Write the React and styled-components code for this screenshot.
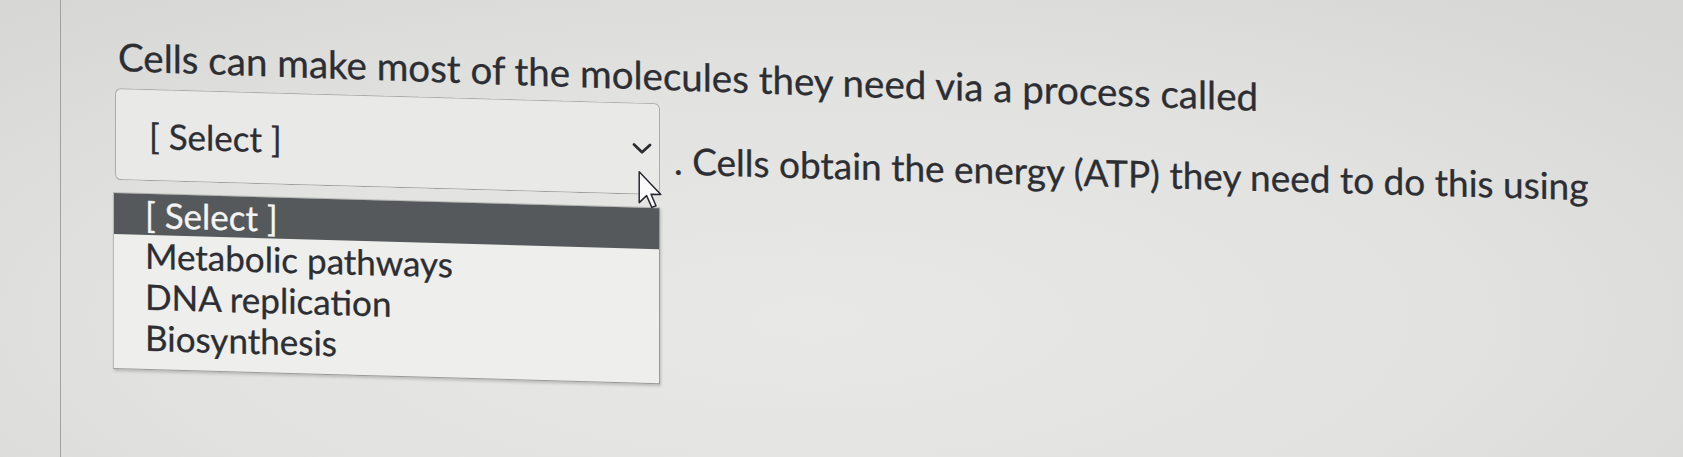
import React from "react";
import styled, { createGlobalStyle } from "styled-components";

const GlobalStyle = createGlobalStyle`
  html, body {
    margin: 0;
    padding: 0;
  }
  body {
    font-family: Lato, "Open Sans", "Liberation Sans", sans-serif;
    color: #2c2e33;
    background: #dfdfdd;
    -webkit-text-stroke: 0.3px currentColor;
  }
`;

const Page = styled.div`
  display: flex;
  width: 1683px;
  height: 457px;
  overflow: hidden;
  background: radial-gradient(
    ellipse 70% 90% at 48% 70%,
    #e8e8e6 0%,
    #e2e2e0 55%,
    #d7d7d5 100%
  );
`;

const Gutter = styled.div`
  width: 60px;
  flex-shrink: 0;
  border-right: 1.5px solid #a2a2a0;
`;

const Sheet = styled.div`
  flex: 1;
  padding: 34px 0 0 53.5px;
`;

/* the screen is seen a little from the side, so rows run slightly downhill */
const Question = styled.div`
  transform: skewY(1.6deg);
  transform-origin: 0 54px;
`;

const Prompt = styled.p`
  margin: 0 0 10px 3px;
  font-size: 38.5px;
  line-height: 44px;
  white-space: nowrap;
  transform: skewY(0.4deg);
  transform-origin: 0 100%;
`;

const AnswerRow = styled.div`
  display: flex;
  align-items: flex-start;
`;

const SelectWrap = styled.div`
  position: relative;
  width: 545px;
  height: 92px;
  flex-shrink: 0;
`;

const SelectBox = styled.div`
  box-sizing: border-box;
  height: 100%;
  display: flex;
  align-items: center;
  justify-content: space-between;
  padding: 0 7px 0 33px;
  border: 1px solid #acacaa;
  border-bottom-color: #9d9d9b;
  border-radius: 6px;
  background: #e9e9e7;
  font-size: 35px;
  line-height: 41px;
`;

const Chevron = () => (
  <svg width="20" height="12" viewBox="0 0 20 12" fill="none">
    <path
      d="M2 2 L10 9.5 L18 2"
      stroke="#2b2d31"
      strokeWidth="2.8"
      strokeLinecap="round"
      strokeLinejoin="round"
    />
  </svg>
);

const Pointer = styled.svg`
  position: absolute;
  left: 523px;
  top: 68px;
  z-index: 3;
`;

const Menu = styled.ul`
  position: absolute;
  top: 104px;
  left: -2px;
  width: 545px;
  margin: 0;
  padding: 0 0 11px;
  list-style: none;
  background: #eeeeec;
  border: 1px solid #b9b9b7;
  border-bottom-color: #9a9a98;
  border-right-color: #9a9a98;
  box-shadow: 1px 2px 3px rgba(0, 0, 0, 0.18);
  z-index: 2;
`;

const Option = styled.li`
  height: 41px;
  padding-left: 31px;
  font-size: 35px;
  line-height: 41px;
  white-space: nowrap;
  color: ${(p) => (p.$active ? "#f4f4f4" : "#2c2e33")};
  background: ${(p) => (p.$active ? "#55595c" : "transparent")};
`;

const Trailing = styled.span`
  margin: 36px 0 0 14px;
  font-size: 37px;
  line-height: 41px;
  white-space: nowrap;
`;

const options = ["[ Select ]", "Metabolic pathways", "DNA replication", "Biosynthesis"];

export default function App() {
  return (
    <>
      <GlobalStyle />
      <Page>
        <Gutter />
        <Sheet>
          <Question>
            <Prompt>Cells can make most of the molecules they need via a process called</Prompt>
            <AnswerRow>
              <SelectWrap>
                <SelectBox>
                  <span>[ Select ]</span>
                  <Chevron />
                </SelectBox>
                <Menu>
                  {options.map((o, i) => (
                    <Option key={o} $active={i === 0}>
                      {o}
                    </Option>
                  ))}
                </Menu>
                <Pointer width="24" height="38" viewBox="0 0 12 19">
                  <path
                    d="M0.6 0.6 L0.6 16 L4.3 12.4 L6.9 18.2 L9 17.3 L6.5 11.6 L11.4 11.6 Z"
                    fill="#fbfbfb"
                    stroke="#2a2630"
                    strokeWidth="0.75"
                    strokeLinejoin="round"
                  />
                </Pointer>
              </SelectWrap>
              <Trailing>. Cells obtain the energy (ATP) they need to do this using</Trailing>
            </AnswerRow>
          </Question>
        </Sheet>
      </Page>
    </>
  );
}
